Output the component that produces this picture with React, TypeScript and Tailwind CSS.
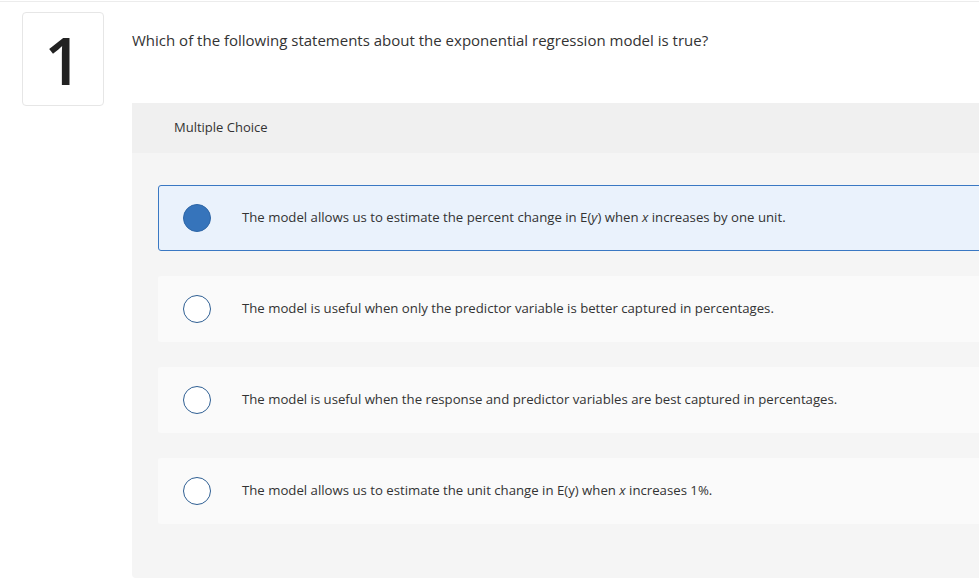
import React from "react";

const options = [
  { id: 1, selected: true, text: <>The model allows us to estimate the percent change in E(<i>y</i>) when <i>x</i> increases by one unit.</> },
  { id: 2, selected: false, text: <>The model is useful when only the predictor variable is better captured in percentages.</> },
  { id: 3, selected: false, text: <>The model is useful when the response and predictor variables are best captured in percentages.</> },
  { id: 4, selected: false, text: <>The model allows us to estimate the unit change in E(y) when <i>x</i> increases 1%.</> },
];

export default function App() {
  return (
    <div className="w-[979px] h-[585px] overflow-hidden bg-white text-[#333]" style={{ fontFamily: "'Open Sans', Lato, sans-serif" }}>
      <div className="h-px mt-px bg-[#ececec]" />
      <div className="flex pt-[10px]">
        <div className="ml-[22px] w-[82px] h-[94px] shrink-0 rounded-[4px] border border-[#e6e6e6] flex items-center justify-center">
          <span className="text-[66px] leading-none text-[#222] font-semibold">1</span>
        </div>
        <div className="ml-[28px] flex-1 min-w-0">
          <p className="mt-[18px] text-[15px] leading-5 text-[#333]">
            Which of the following statements about the exponential regression model is true?
          </p>
          <div className="mt-[53px] w-[1000px] h-[475px] rounded-bl-[4px] bg-[#f5f5f5]">
            <div className="h-[50px] bg-[#f0f0f0] flex items-center pl-[42px] text-[13px] text-[#333]">
              Multiple Choice
            </div>
            <div className="pt-[32px] pl-[26px] flex flex-col gap-[25px]">
              {options.map((o) => (
                <div
                  key={o.id}
                  className={
                    o.selected
                      ? "h-[66px] flex items-center rounded-[3px] border border-[#3a78c3] bg-[#eaf2fc]"
                      : "h-[66px] flex items-center rounded-[3px] border border-transparent bg-[#fafafa]"
                  }
                >
                  <span
                    className={
                      o.selected
                        ? "ml-[24px] w-[28px] h-[28px] rounded-full border border-[#2e66a6] bg-[#3674bb] shrink-0"
                        : "ml-[24px] w-[28px] h-[28px] rounded-full border-[1.5px] border-[#2f5f93] bg-white shrink-0"
                    }
                  />
                  <span className="ml-[31px] text-[13.2px] text-[#333]">{o.text}</span>
                </div>
              ))}
            </div>
          </div>
        </div>
      </div>
    </div>
  );
}
